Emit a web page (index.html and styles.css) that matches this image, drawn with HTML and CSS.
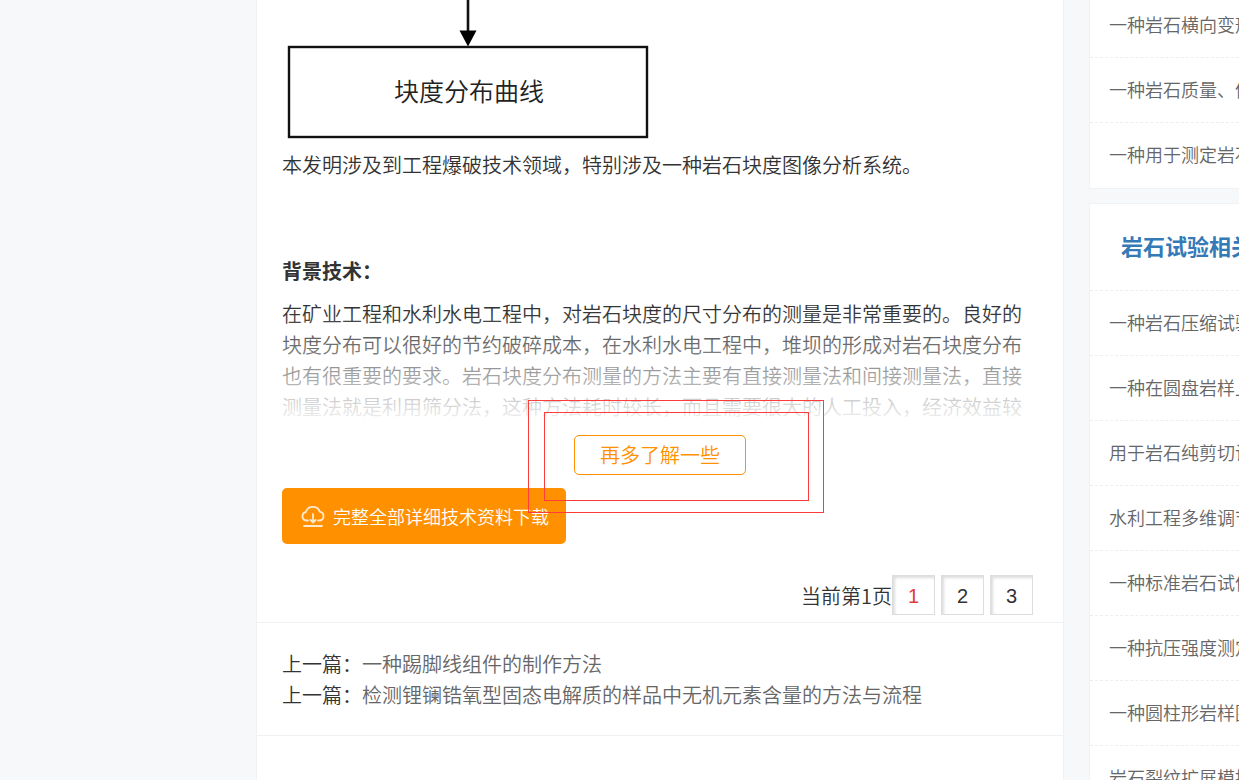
FILE: index.html
```html
<!DOCTYPE html>
<html lang="zh-CN">
<head>
  <meta charset="UTF-8" />
  <meta name="viewport" content="width=device-width, initial-scale=1.0"/>
  <title>一种岩石块度图像分析系统</title>
  <link rel="stylesheet" href="styles.css">
</head>
<body>
  <div class="page">
    <main class="main">
      <article class="article">
        <svg class="figure" width="380" height="149" viewBox="0 0 380 149" role="img" aria-label="流程图">
          <path d="M186 0v36" stroke="#111" stroke-width="2.6"/>
          <path d="M177.500 30.500h17l-8.500 16z" fill="#000"/>
          <rect x="7" y="47" width="358" height="90" fill="none" stroke="#111" stroke-width="2.4"/>
          <text class="figure-text" x="187" y="101" text-anchor="middle">块度分布曲线</text>
        </svg>
        <p class="summary">本发明涉及到工程爆破技术领域，特别涉及一种岩石块度图像分析系统。</p>
        <h2 class="subtitle">背景技术：</h2>
        <p class="fade">在矿业工程和水利水电工程中，对岩石块度的尺寸分布的测量是非常重要的。良好的块度分布可以很好的节约破碎成本，在水利水电工程中，堆坝的形成对岩石块度分布也有很重要的要求。岩石块度分布测量的方法主要有直接测量法和间接测量法，直接测量法就是利用筛分法，这种方法耗时较长，而且需要很大的人工投入，经济效益较</p>
      </article>

      <div class="more">
        <div class="more-wrap">
          <button class="more-btn" type="button">再多了解一些</button>
          <span class="mark mark-outer"></span>
          <span class="mark mark-inner"></span>
        </div>
      </div>

      <div class="actions">
        <a class="download" href="#">
          <svg width="24" height="24" viewBox="0 0 24 24" fill="none" stroke="#ffe9cc" stroke-width="1.8" stroke-linecap="round" stroke-linejoin="round">
            <path d="M7 16.500H5.500A4.200 4.200 0 0 1 4.800 8.200 7.400 7.400 0 0 1 18.800 7.600a4.500 4.500 0 0 1-.300 8.900H17"/>
            <path d="M12 10v8.500M9.500 16l2.500 2.500 2.500-2.500M3 22h18"/>
          </svg>
          <span>完整全部详细技术资料下载</span>
        </a>
      </div>

      <nav class="pager">
        <span>当前第1页</span>
        <a class="num active" href="#">1</a>
        <a class="num" href="#">2</a>
        <a class="num" href="#">3</a>
      </nav>

      <div class="siblings">
        <p>上一篇：<a href="#">一种踢脚线组件的制作方法</a></p>
        <p>上一篇：<a href="#">检测锂镧锆氧型固态电解质的样品中无机元素含量的方法与流程</a></p>
      </div>
    </main>

    <aside class="side">
      <section class="card card-top">
        <ul class="list">
          <li><a href="#">一种岩石横向变形</a></li>
          <li><a href="#">一种岩石质量、体</a></li>
          <li><a href="#">一种用于测定岩石</a></li>
        </ul>
      </section>
      <section class="card">
        <h3 class="card-title">岩石试验相关</h3>
        <ul class="list">
          <li><a href="#">一种岩石压缩试验</a></li>
          <li><a href="#">一种在圆盘岩样上</a></li>
          <li><a href="#">用于岩石纯剪切试</a></li>
          <li><a href="#">水利工程多维调节</a></li>
          <li><a href="#">一种标准岩石试件</a></li>
          <li><a href="#">一种抗压强度测定</a></li>
          <li><a href="#">一种圆柱形岩样围</a></li>
          <li><a href="#">岩石裂纹扩展模拟</a></li>
        </ul>
      </section>
    </aside>
  </div>
</body>
</html>
```

FILE: styles.css
```css
* {
  box-sizing: border-box;
}
body {
  margin: 0;
  height: 100vh;
  overflow: hidden;
  background-color: #f6f8fa;
  color: #333;
  font-family: "Noto Sans CJK SC", sans-serif;
  font-size: 20px;
  font-weight: 350;
  line-height: 31px;
}
p, h2, h3, ul {
  margin: 0;
  padding: 0;
}
a {
  color: #666;
  text-decoration: none;
}

.page {
  display: grid;
  grid-template-columns: minmax(0, 1fr) 150px;
  gap: 25px;
  padding-left: 256px;
}

/* Artikel */
.main {
  min-height: 100vh;
  background-color: #fff;
  border: solid #f0f1f3;
  border-width: 0 1px;
}
.article {
  padding: 0 30px 0 25px;
}
.figure {
  display: block;
}
.figure-text {
  font-size: 25px;
  fill: #222;
}
.subtitle {
  margin: 75px 0 12px;
  font-size: 20px;
  font-weight: bold;
}
.fade {
  position: relative;
}
.fade::after {
  content: "";
  position: absolute;
  inset: 0;
  background: linear-gradient(rgba(255, 255, 255, 0) 10%, #fff 105%);
}

.more {
  margin: 13px 0;
  text-align: center;
}
.more-wrap {
  position: relative;
  display: inline-block;
  vertical-align: top;
}
.more-btn {
  display: block;
  height: 40px;
  padding: 0 25px 2px;
  border: 1px solid #ff9100;
  border-radius: 5px;
  background-color: #fff;
  color: #ff9100;
  font: inherit;
  cursor: pointer;
}
.mark {
  position: absolute;
  border: 1px solid #ff3b3b;
  pointer-events: none;
}
.mark-outer {
  inset: -35px -78px -38px -46px;
}
.mark-inner {
  inset: -23px -63px -26px -30px;
}

.actions {
  padding: 0 25px;
}
.download {
  display: inline-flex;
  align-items: center;
  gap: 8px;
  height: 56px;
  padding: 0 17px 0 19px;
  border-radius: 5px;
  background-color: #ff9100;
  color: #fff;
  font-size: 18px;
  vertical-align: top;
}

.pager {
  display: flex;
  justify-content: flex-end;
  align-items: center;
  gap: 6px;
  margin-top: 31px;
  padding: 0 30px 7px;
}
.pager span {
  margin-right: -6px;
}
.num {
  width: 43px;
  height: 40px;
  border: 1px solid #ddd;
  box-shadow: inset 2px 2px 3px #ddd;
  color: #333;
  font-family: "Liberation Sans", sans-serif;
  line-height: 41px;
  text-align: center;
}
.num.active {
  color: #e4393c;
}

.siblings {
  padding: 25px;
  border: solid #f0f1f3;
  border-width: 1px 0;
}

/* Seitenleiste */
.card {
  margin-bottom: 14px;
  background-color: #fff;
  border: 1px solid #f0f1f3;
  border-right: none;
}
.card-top {
  margin-top: -8px;
}
.card-title {
  overflow: hidden;
  padding: 26px 0 29px 31px;
  border-bottom: 1px dashed #eee;
  color: #337ab7;
  font-size: 22px;
  font-weight: bold;
  white-space: nowrap;
}
.list {
  list-style: none;
}
.list li {
  overflow: hidden;
  height: 65px;
  padding-left: 19px;
  border-bottom: 1px dashed #eee;
  font-size: 18px;
  line-height: 63px;
  white-space: nowrap;
}
.list li:last-child {
  border-bottom: none;
}
```
